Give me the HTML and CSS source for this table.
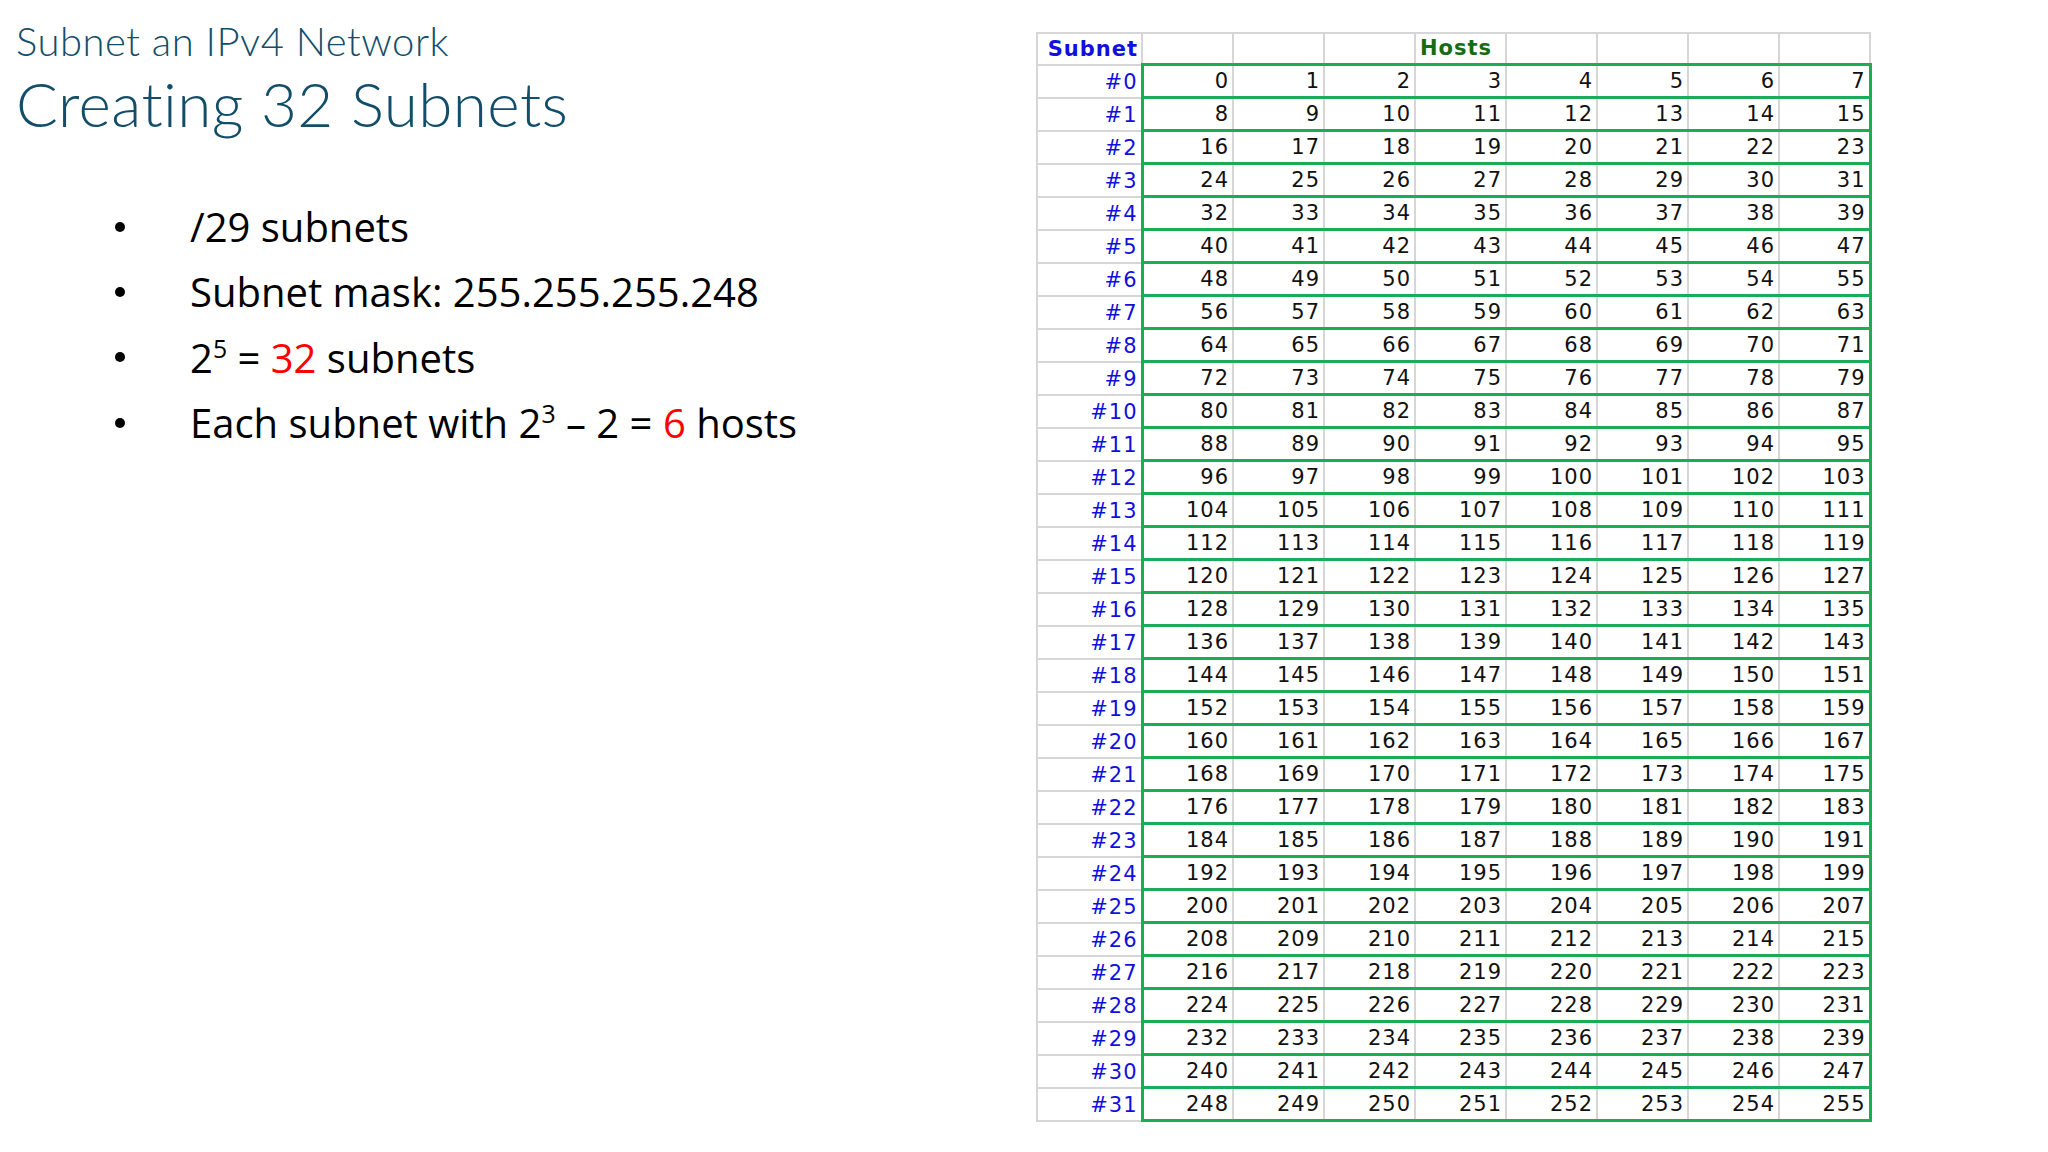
FILE: index.html
```html
<!DOCTYPE html>
<html lang="en">
<head>
<meta charset="utf-8">
<title>Creating 32 Subnets</title>
<link rel="stylesheet" href="styles.css">
</head>
<body>
<div class="slide">
  <section class="text">
    <h2 class="kicker">Subnet an IPv4 Network</h2>
    <h1 class="title">Creating 32 Subnets</h1>
    <ul class="points">
      <li><span class="dot"></span><span>/29 subnets</span></li>
      <li><span class="dot"></span><span>Subnet mask: 255.255.255.248</span></li>
      <li><span class="dot"></span><span>2<sup>5</sup> = <em class="hl">32</em> subnets</span></li>
      <li><span class="dot"></span><span>Each subnet with 2<sup>3</sup> – 2 = <em class="hl">6</em> hosts</span></li>
    </ul>
  </section>
  <table class="grid">
    <colgroup>
      <col class="c-lbl"><col><col><col><col><col><col><col><col>
    </colgroup>
    <thead>
      <tr><th class="h-sub">Subnet</th><th></th><th></th><th></th><th class="h-hosts">Hosts</th><th></th><th></th><th></th><th></th></tr>
    </thead>
    <tbody>
      <tr><td class="lbl">#0</td><td class="n first">0</td><td class="n">1</td><td class="n">2</td><td class="n">3</td><td class="n">4</td><td class="n">5</td><td class="n">6</td><td class="n last">7</td></tr>
      <tr><td class="lbl">#1</td><td class="n first">8</td><td class="n">9</td><td class="n">10</td><td class="n">11</td><td class="n">12</td><td class="n">13</td><td class="n">14</td><td class="n last">15</td></tr>
      <tr><td class="lbl">#2</td><td class="n first">16</td><td class="n">17</td><td class="n">18</td><td class="n">19</td><td class="n">20</td><td class="n">21</td><td class="n">22</td><td class="n last">23</td></tr>
      <tr><td class="lbl">#3</td><td class="n first">24</td><td class="n">25</td><td class="n">26</td><td class="n">27</td><td class="n">28</td><td class="n">29</td><td class="n">30</td><td class="n last">31</td></tr>
      <tr><td class="lbl">#4</td><td class="n first">32</td><td class="n">33</td><td class="n">34</td><td class="n">35</td><td class="n">36</td><td class="n">37</td><td class="n">38</td><td class="n last">39</td></tr>
      <tr><td class="lbl">#5</td><td class="n first">40</td><td class="n">41</td><td class="n">42</td><td class="n">43</td><td class="n">44</td><td class="n">45</td><td class="n">46</td><td class="n last">47</td></tr>
      <tr><td class="lbl">#6</td><td class="n first">48</td><td class="n">49</td><td class="n">50</td><td class="n">51</td><td class="n">52</td><td class="n">53</td><td class="n">54</td><td class="n last">55</td></tr>
      <tr><td class="lbl">#7</td><td class="n first">56</td><td class="n">57</td><td class="n">58</td><td class="n">59</td><td class="n">60</td><td class="n">61</td><td class="n">62</td><td class="n last">63</td></tr>
      <tr><td class="lbl">#8</td><td class="n first">64</td><td class="n">65</td><td class="n">66</td><td class="n">67</td><td class="n">68</td><td class="n">69</td><td class="n">70</td><td class="n last">71</td></tr>
      <tr><td class="lbl">#9</td><td class="n first">72</td><td class="n">73</td><td class="n">74</td><td class="n">75</td><td class="n">76</td><td class="n">77</td><td class="n">78</td><td class="n last">79</td></tr>
      <tr><td class="lbl">#10</td><td class="n first">80</td><td class="n">81</td><td class="n">82</td><td class="n">83</td><td class="n">84</td><td class="n">85</td><td class="n">86</td><td class="n last">87</td></tr>
      <tr><td class="lbl">#11</td><td class="n first">88</td><td class="n">89</td><td class="n">90</td><td class="n">91</td><td class="n">92</td><td class="n">93</td><td class="n">94</td><td class="n last">95</td></tr>
      <tr><td class="lbl">#12</td><td class="n first">96</td><td class="n">97</td><td class="n">98</td><td class="n">99</td><td class="n">100</td><td class="n">101</td><td class="n">102</td><td class="n last">103</td></tr>
      <tr><td class="lbl">#13</td><td class="n first">104</td><td class="n">105</td><td class="n">106</td><td class="n">107</td><td class="n">108</td><td class="n">109</td><td class="n">110</td><td class="n last">111</td></tr>
      <tr><td class="lbl">#14</td><td class="n first">112</td><td class="n">113</td><td class="n">114</td><td class="n">115</td><td class="n">116</td><td class="n">117</td><td class="n">118</td><td class="n last">119</td></tr>
      <tr><td class="lbl">#15</td><td class="n first">120</td><td class="n">121</td><td class="n">122</td><td class="n">123</td><td class="n">124</td><td class="n">125</td><td class="n">126</td><td class="n last">127</td></tr>
      <tr><td class="lbl">#16</td><td class="n first">128</td><td class="n">129</td><td class="n">130</td><td class="n">131</td><td class="n">132</td><td class="n">133</td><td class="n">134</td><td class="n last">135</td></tr>
      <tr><td class="lbl">#17</td><td class="n first">136</td><td class="n">137</td><td class="n">138</td><td class="n">139</td><td class="n">140</td><td class="n">141</td><td class="n">142</td><td class="n last">143</td></tr>
      <tr><td class="lbl">#18</td><td class="n first">144</td><td class="n">145</td><td class="n">146</td><td class="n">147</td><td class="n">148</td><td class="n">149</td><td class="n">150</td><td class="n last">151</td></tr>
      <tr><td class="lbl">#19</td><td class="n first">152</td><td class="n">153</td><td class="n">154</td><td class="n">155</td><td class="n">156</td><td class="n">157</td><td class="n">158</td><td class="n last">159</td></tr>
      <tr><td class="lbl">#20</td><td class="n first">160</td><td class="n">161</td><td class="n">162</td><td class="n">163</td><td class="n">164</td><td class="n">165</td><td class="n">166</td><td class="n last">167</td></tr>
      <tr><td class="lbl">#21</td><td class="n first">168</td><td class="n">169</td><td class="n">170</td><td class="n">171</td><td class="n">172</td><td class="n">173</td><td class="n">174</td><td class="n last">175</td></tr>
      <tr><td class="lbl">#22</td><td class="n first">176</td><td class="n">177</td><td class="n">178</td><td class="n">179</td><td class="n">180</td><td class="n">181</td><td class="n">182</td><td class="n last">183</td></tr>
      <tr><td class="lbl">#23</td><td class="n first">184</td><td class="n">185</td><td class="n">186</td><td class="n">187</td><td class="n">188</td><td class="n">189</td><td class="n">190</td><td class="n last">191</td></tr>
      <tr><td class="lbl">#24</td><td class="n first">192</td><td class="n">193</td><td class="n">194</td><td class="n">195</td><td class="n">196</td><td class="n">197</td><td class="n">198</td><td class="n last">199</td></tr>
      <tr><td class="lbl">#25</td><td class="n first">200</td><td class="n">201</td><td class="n">202</td><td class="n">203</td><td class="n">204</td><td class="n">205</td><td class="n">206</td><td class="n last">207</td></tr>
      <tr><td class="lbl">#26</td><td class="n first">208</td><td class="n">209</td><td class="n">210</td><td class="n">211</td><td class="n">212</td><td class="n">213</td><td class="n">214</td><td class="n last">215</td></tr>
      <tr><td class="lbl">#27</td><td class="n first">216</td><td class="n">217</td><td class="n">218</td><td class="n">219</td><td class="n">220</td><td class="n">221</td><td class="n">222</td><td class="n last">223</td></tr>
      <tr><td class="lbl">#28</td><td class="n first">224</td><td class="n">225</td><td class="n">226</td><td class="n">227</td><td class="n">228</td><td class="n">229</td><td class="n">230</td><td class="n last">231</td></tr>
      <tr><td class="lbl">#29</td><td class="n first">232</td><td class="n">233</td><td class="n">234</td><td class="n">235</td><td class="n">236</td><td class="n">237</td><td class="n">238</td><td class="n last">239</td></tr>
      <tr><td class="lbl">#30</td><td class="n first">240</td><td class="n">241</td><td class="n">242</td><td class="n">243</td><td class="n">244</td><td class="n">245</td><td class="n">246</td><td class="n last">247</td></tr>
      <tr><td class="lbl">#31</td><td class="n first">248</td><td class="n">249</td><td class="n">250</td><td class="n">251</td><td class="n">252</td><td class="n">253</td><td class="n">254</td><td class="n last">255</td></tr>
    </tbody>
  </table>
</div>
</body>
</html>
```

FILE: styles.css
```css
html, body {
  margin: 0;
  padding: 0;
  background: #ffffff;
}

.slide {
  display: flex;
  align-items: flex-start;
  width: 2048px;
  height: 1152px;
  overflow: hidden;
}

.text {
  box-sizing: border-box;
  width: 1036px;
  flex: none;
  padding-left: 16px;
}

.kicker {
  margin: 17px 0 0;
  font: 300 40px/48px "Lato", "Open Sans", sans-serif;
  letter-spacing: 0.5px;
  color: #124e6a;
}

.title {
  margin: 1px 0 0;
  font: 300 62px/74px "Lato", "Open Sans", sans-serif;
  letter-spacing: 0.4px;
  color: #124e6a;
}

.points {
  list-style: none;
  margin: 54px 0 0;
  padding: 0;
  font: 400 40px/65.33px "Open Sans", "Liberation Sans", sans-serif;
  color: #000000;
}

.points li {
  display: flex;
  align-items: center;
}

.dot {
  flex: none;
  width: 10px;
  height: 10px;
  border-radius: 50%;
  background: #000000;
  margin: 0 65px 0 99px;
}

.points sup {
  font-size: 0.62em;
  line-height: 0;
  vertical-align: 0.62em;
}

.hl {
  font-style: normal;
  color: #ff0000;
}

.grid {
  flex: none;
  margin-top: 32px;
  border-collapse: collapse;
  table-layout: fixed;
  width: 833px;
  font: 21px/24px "DejaVu Sans", "Verdana", sans-serif;
  letter-spacing: 1px;
  color: #111111;
}

.grid col {
  width: 91px;
}

.grid col.c-lbl {
  width: 105px;
}

.grid th,
.grid td {
  border: 2px solid #d6d6d6;
  padding: 0 3px 3px 0;
  text-align: right;
  vertical-align: bottom;
}

.grid th {
  height: 26px;
  font-weight: bold;
}

.grid td {
  height: 27px;
}

.grid .h-sub {
  color: #1010dd;
}

.grid .h-hosts {
  color: #146c14;
  text-align: left;
  padding-left: 4px;
}

.grid .lbl {
  color: #1010dd;
}

.grid .n {
  border-top: 3px solid #1aad58;
  border-bottom: 3px solid #1aad58;
}

.grid .n.first {
  border-left: 3px solid #1aad58;
}

.grid .n.last {
  border-right: 3px solid #1aad58;
}
```
